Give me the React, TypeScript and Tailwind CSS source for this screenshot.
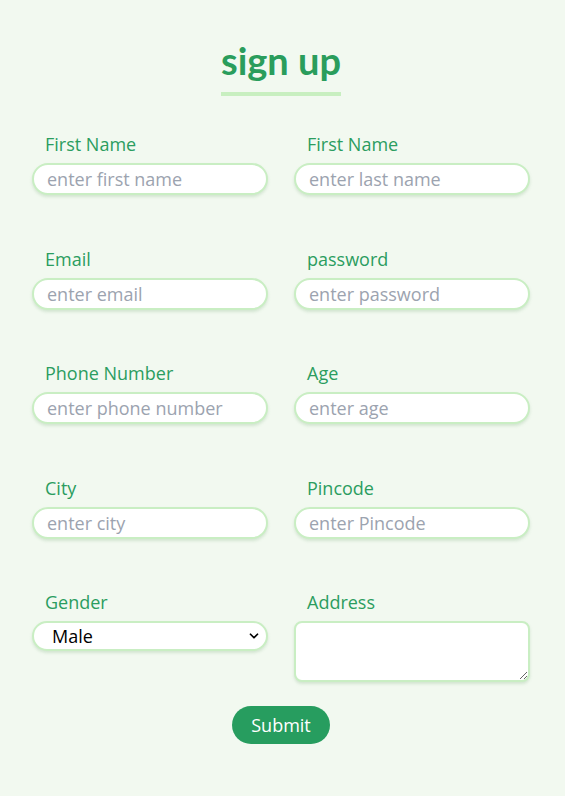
import { ChevronDown } from "lucide-react";

const fields = [
  { label: "First Name", placeholder: "enter first name" },
  { label: "First Name", placeholder: "enter last name" },
  { label: "Email", placeholder: "enter email" },
  { label: "password", placeholder: "enter password" },
  { label: "Phone Number", placeholder: "enter phone number" },
  { label: "Age", placeholder: "enter age" },
  { label: "City", placeholder: "enter city" },
  { label: "Pincode", placeholder: "enter Pincode" },
];

const inputCls =
  "h-8 w-full rounded-full border-2 border-[#c9eec3] bg-white px-[13px] text-[18px] text-black outline-none placeholder:text-[#9ca3af] shadow-[0_2px_3px_rgba(120,170,120,0.25)]";

function Field({ label, children }: { label: string; children: React.ReactNode }) {
  return (
    <div className="flex flex-col gap-[7px]">
      <label className="pl-[13px] text-[18px] leading-6 text-[#2b9d5f]">{label}</label>
      {children}
    </div>
  );
}

export default function App() {
  return (
    <div
      className="min-h-[796px] w-full bg-[#f2f9f0] pl-8"
      style={{ fontFamily: '"Open Sans", "Noto Sans", sans-serif' }}
    >
      <div className="w-[498px]">
        <div className="flex flex-col items-center pt-[37px]">
          <h1
            className="border-b-4 border-[#c8efc0] pb-[9px] text-[38px] font-bold leading-[46px] text-[#2a9d5c]"
            style={{ fontFamily: '"Lato", "Open Sans", sans-serif' }}
          >
            sign up
          </h1>
        </div>

        <form className="mt-[36px]" onSubmit={(e) => e.preventDefault()}>
          <div className="grid grid-cols-2 gap-x-[26px] gap-y-[51.5px]">
            {fields.map((f, i) => (
              <Field key={i} label={f.label}>
                <input className={inputCls} placeholder={f.placeholder} />
              </Field>
            ))}
            <Field label="Gender">
              <div className="relative">
                <select
                  className="h-[30px] w-full appearance-none rounded-full border-2 border-[#c9eec3] bg-white pl-[18px] text-[18px] text-black outline-none shadow-[0_2px_3px_rgba(120,170,120,0.25)]"
                  defaultValue="Male"
                >
                  <option>Male</option>
                  <option>Female</option>
                </select>
                <ChevronDown
                  className="pointer-events-none absolute right-[7px] top-[8px] h-[14px] w-[14px] text-black"
                  strokeWidth={3}
                />
              </div>
            </Field>
            <Field label="Address">
              <textarea className="h-[61px] w-full rounded-lg border-2 border-[#c9eec3] bg-white px-2 text-[16px] outline-none shadow-[0_2px_3px_rgba(120,170,120,0.25)]" />
            </Field>
          </div>
          <div className="mt-6 flex justify-center">
            <button
              type="submit"
              className="h-[38px] w-[98px] rounded-full bg-[#279d5f] text-[18px] text-white"
            >
              Submit
            </button>
          </div>
        </form>
      </div>
    </div>
  );
}
